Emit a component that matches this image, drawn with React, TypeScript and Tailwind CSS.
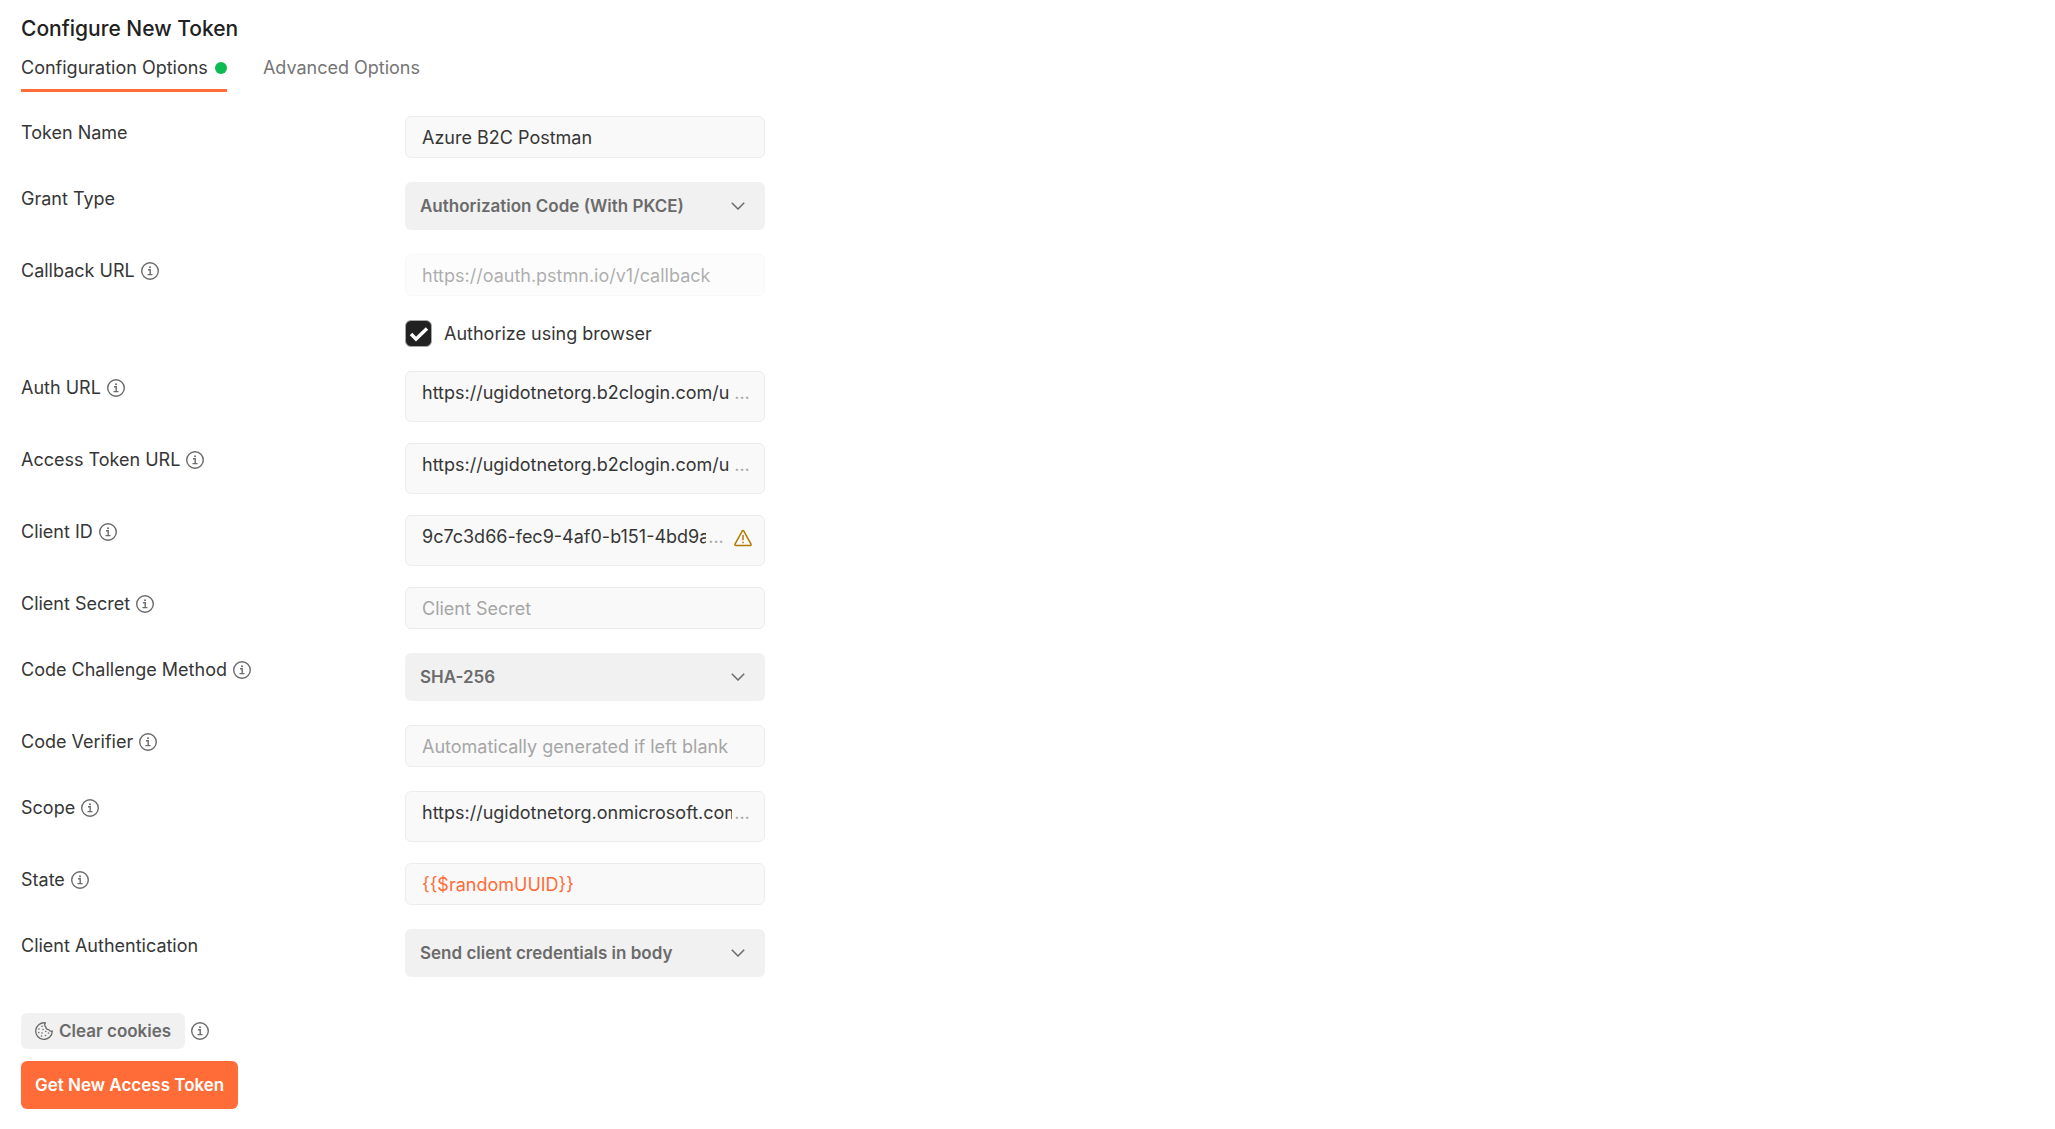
import { useState, type ReactNode } from "react";
import clsx from "clsx";

type Field = {
  id: string;
  label: string;
  info?: boolean;
  kind: "text" | "long" | "select";
  value?: string;
  placeholder?: string;
  options?: string[];
  disabled?: boolean;
  variable?: boolean;
  warning?: boolean;
};

const CALLBACK_FIELDS: Field[] = [
  { id: "token-name", label: "Token Name", kind: "text", value: "Azure B2C Postman" },
  { id: "grant-type", label: "Grant Type", kind: "select", options: ["Authorization Code (With PKCE)"] },
  {
    id: "callback-url",
    label: "Callback URL",
    info: true,
    kind: "text",
    value: "https://oauth.pstmn.io/v1/callback",
    disabled: true,
  },
];

const CLIENT_FIELDS: Field[] = [
  { id: "auth-url", label: "Auth URL", info: true, kind: "long", value: "https://ugidotnetorg.b2clogin.com/u" },
  {
    id: "access-token-url",
    label: "Access Token URL",
    info: true,
    kind: "long",
    value: "https://ugidotnetorg.b2clogin.com/u",
  },
  {
    id: "client-id",
    label: "Client ID",
    info: true,
    kind: "long",
    value: "9c7c3d66-fec9-4af0-b151-4bd9a",
    warning: true,
  },
  { id: "client-secret", label: "Client Secret", info: true, kind: "text", placeholder: "Client Secret" },
  { id: "challenge-method", label: "Code Challenge Method", info: true, kind: "select", options: ["SHA-256"] },
  {
    id: "code-verifier",
    label: "Code Verifier",
    info: true,
    kind: "text",
    placeholder: "Automatically generated if left blank",
  },
  { id: "scope", label: "Scope", info: true, kind: "long", value: "https://ugidotnetorg.onmicrosoft.com" },
  { id: "state", label: "State", info: true, kind: "text", value: "{{$randomUUID}}", variable: true },
  {
    id: "client-auth",
    label: "Client Authentication",
    kind: "select",
    options: ["Send client credentials in body"],
  },
];

function InfoIcon() {
  return (
    <svg width="18" height="18" viewBox="0 0 18 18" fill="none" stroke="#6b6b6b" className="shrink-0" aria-hidden="true">
      <circle cx="9" cy="9" r="8.3" strokeWidth="1.4" />
      <path d="M7 7.8h2.2v4.7M6.5 12.6h5" strokeWidth="1.4" />
      <circle cx="9" cy="5.3" r="1" fill="#6b6b6b" stroke="none" />
    </svg>
  );
}

function WarningIcon() {
  return (
    <svg width="18" height="18" viewBox="0 0 18 18" fill="none" stroke="#b27a00" className="shrink-0" aria-hidden="true">
      <path d="M8.3 1.9a.8.8 0 0 1 1.4 0l7.3 13.3a.8.8 0 0 1-.7 1.2H1.7a.8.8 0 0 1-.7-1.2z" strokeWidth="1.5" />
      <path d="M9 6v5.3M9 12.7v1.6" strokeWidth="1.5" />
    </svg>
  );
}

function CookieIcon() {
  return (
    <svg width="18" height="18" viewBox="0 0 18 18" fill="none" stroke="#6b6b6b" aria-hidden="true">
      <path
        d="M10.4.9A8.3 8.3 0 1 0 17.3 9c-1.5.5-2.9 0-3.4-1.4-1.8.3-3.2-.8-2.9-2.5C9.7 4.3 9.5 2.4 10.4.9z"
        strokeWidth="1.3"
        strokeLinejoin="round"
      />
      <g fill="#6b6b6b" stroke="none">
        <circle cx="7" cy="4.2" r=".8" />
        <circle cx="4" cy="7" r=".8" />
        <circle cx="8" cy="7.5" r=".8" />
        <circle cx="3.8" cy="10.6" r=".8" />
        <circle cx="7" cy="11" r=".8" />
        <circle cx="10.8" cy="9.5" r=".8" />
        <circle cx="13.5" cy="11" r=".8" />
        <circle cx="6.5" cy="14" r=".8" />
        <circle cx="10.5" cy="13.5" r=".8" />
      </g>
    </svg>
  );
}

function TextField({ field }: { field: Field }) {
  return (
    <input
      id={field.id}
      type="text"
      defaultValue={field.value}
      placeholder={field.placeholder}
      disabled={field.disabled}
      className={clsx(
        "block h-[42px] w-full rounded-md border border-[#ededed] bg-[#f9f9f9] px-4 placeholder:text-[#a6a6a6]",
        field.variable && "text-[#ff6c37]",
        field.disabled && "opacity-40"
      )}
    />
  );
}

// Collapsed multi-line value: clipped with a faint ellipsis after it
function LongField({ field }: { field: Field }) {
  return (
    <div className="flex h-[51px] items-start rounded-md border border-[#ededed] bg-[#f9f9f9] pt-[9px] pr-3 pl-4">
      <input
        id={field.id}
        type="text"
        defaultValue={field.value}
        className="h-6 min-w-0 flex-1 bg-transparent"
      />
      <span className="w-5 text-center text-[#a6a6a6]">...</span>
      {field.warning && (
        <span className="pt-1 pl-2">
          <WarningIcon />
        </span>
      )}
    </div>
  );
}

function SelectField({ field }: { field: Field }) {
  return (
    <div className="relative">
      <select
        id={field.id}
        className="block h-12 w-full appearance-none rounded-md bg-[#f1f1f1] pr-12 pl-[15px] text-[17px] font-semibold text-[#6b6b6b]"
      >
        {field.options?.map((o) => (
          <option key={o}>{o}</option>
        ))}
      </select>
      <svg
        width="14"
        height="8"
        viewBox="0 0 14 8"
        fill="none"
        stroke="#6b6b6b"
        strokeWidth="1.5"
        className="pointer-events-none absolute top-5 right-5"
        aria-hidden="true"
      >
        <path d="M.8.8 7 7 13.2.8" />
      </svg>
    </div>
  );
}

function Row({ field, children }: { field: Field; children: ReactNode }) {
  return (
    <div className={clsx("flex items-start", field.kind === "long" ? "pb-[21px]" : "pb-6")}>
      <div className="flex w-96 shrink-0 items-center gap-[6px] pt-[5px]">
        <label htmlFor={field.id}>{field.label}</label>
        {field.info && <InfoIcon />}
      </div>
      <div className="w-[360px]">{children}</div>
    </div>
  );
}

function FieldRow({ field }: { field: Field }) {
  return (
    <Row field={field}>
      {field.kind === "text" && <TextField field={field} />}
      {field.kind === "long" && <LongField field={field} />}
      {field.kind === "select" && <SelectField field={field} />}
    </Row>
  );
}

export default function App() {
  const [useBrowser, setUseBrowser] = useState(true);

  return (
    <main className="min-h-screen bg-white px-[21px] pt-[17px] pb-5 font-['Inter',sans-serif] text-[18px] leading-6 text-[#363636]">
      <h1 className="text-[21px] leading-6 font-medium text-[#212121]">Configure New Token</h1>

      <nav className="mt-[15px] flex gap-9">
        <button type="button" className="flex items-center gap-[7px] border-b-[3px] border-[#ff6c37] pb-[9px]">
          Configuration Options
          <span className="size-3 rounded-full bg-[#0cbb52]" />
        </button>
        <button type="button" className="pb-3 text-[#757575]">
          Advanced Options
        </button>
      </nav>

      <form className="mt-6" onSubmit={(e) => e.preventDefault()}>
        {CALLBACK_FIELDS.map((f) => (
          <FieldRow key={f.id} field={f} />
        ))}

        <label className="ml-96 flex w-[360px] items-center gap-3 pb-6">
          <span className="relative flex size-[27px]">
            <input
              type="checkbox"
              checked={useBrowser}
              onChange={(e) => setUseBrowser(e.target.checked)}
              className="size-[27px] appearance-none rounded-md border border-[#a6a6a6] checked:bg-[#212121]"
            />
            {useBrowser && (
              <svg
                viewBox="0 0 27 27"
                fill="none"
                stroke="#fff"
                strokeWidth="3.4"
                className="pointer-events-none absolute inset-0"
                aria-hidden="true"
              >
                <path d="M6 14l5 5L22 8.5" />
              </svg>
            )}
          </span>
          Authorize using browser
        </label>

        {CLIENT_FIELDS.map((f) => (
          <FieldRow key={f.id} field={f} />
        ))}

        <div className="mt-3 flex items-center gap-[6px]">
          <button
            type="button"
            className="flex h-9 items-center gap-[6px] rounded-md bg-[#f1f1f1] px-[14px] text-[17px] font-semibold text-[#6b6b6b]"
          >
            <CookieIcon />
            Clear cookies
          </button>
          <InfoIcon />
        </div>

        <button type="submit" className="mt-3 h-12 rounded-md bg-[#ff6c37] px-[14px] text-[17px] font-semibold text-white">
          Get New Access Token
        </button>
      </form>
    </main>
  );
}
